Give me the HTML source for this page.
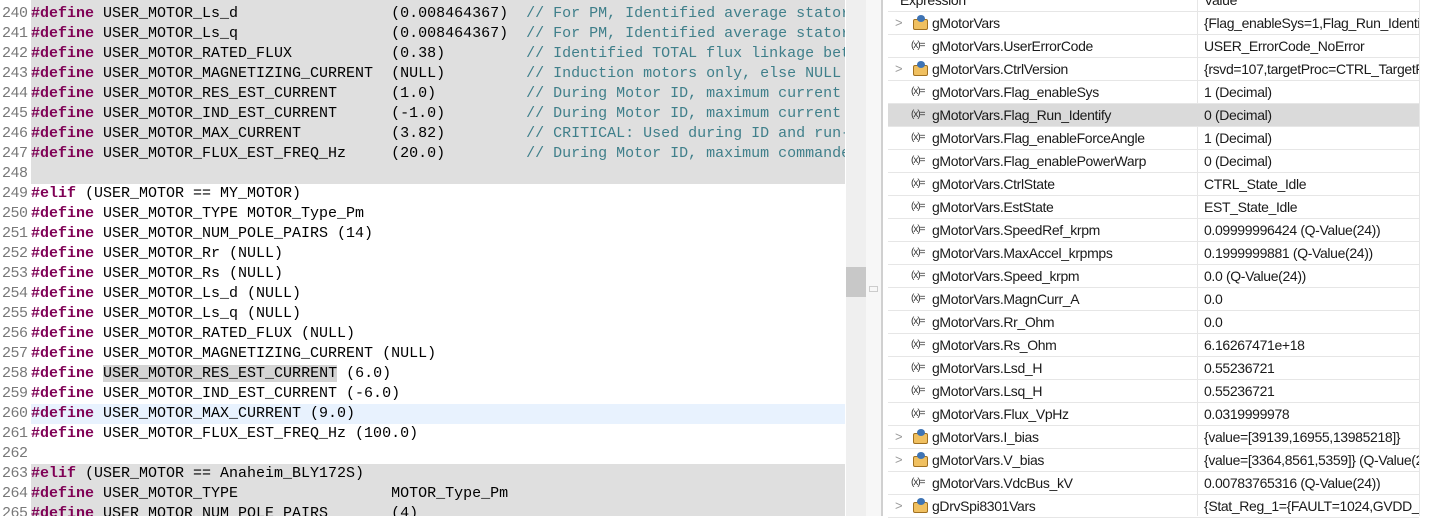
<!DOCTYPE html>
<html><head><style>
body{margin:0;width:1435px;height:516px;overflow:hidden;background:#fff;position:relative;font-family:"Liberation Mono",monospace}
.ed{position:absolute;left:0;top:0;width:845px;height:516px;overflow:hidden;background:#fff}
.ln{position:absolute;left:0;width:845px;height:20px;font-size:15px;line-height:20px;white-space:pre;color:#000}
.ln .n{display:inline-block;width:29px;color:#787878;background:#fff;padding-left:2px;letter-spacing:-0.5px}
.g{background:#dfdfdf}
.b{background:#e8f2fe}
.k{color:#7f0055;font-weight:bold}
.c{color:#3f7f8a}
.sel{background:#d4d4d4}
.sb{position:absolute;left:846px;top:0;width:20px;height:516px;background:#efefef}
.th{position:absolute;left:846px;top:267px;width:20px;height:30px;background:#c8c8c8}
.ov{position:absolute;left:866px;top:0;width:15px;height:516px;background:#f7f7f7}
.vl{position:absolute;left:881px;top:0;width:2px;height:516px;background:#d0d0d0}
.pn{position:absolute;left:883px;top:0;width:552px;height:516px;background:#fff;font-family:"Liberation Sans",sans-serif;font-size:14px;letter-spacing:-0.35px}
.r{position:absolute;left:5px;width:531px;height:22px;border-bottom:1px solid #e6e6e6;line-height:22px;color:#1a1a1a}
.r .e{position:absolute;left:44px;white-space:nowrap}
.r .v{position:absolute;left:316px;width:215px;overflow:hidden;white-space:nowrap}
.r .ar{position:absolute;left:7px;top:0;color:#999;font-size:13px}
.r .x{position:absolute;left:23px;font-size:10px;color:#333;letter-spacing:-1px}
.fo{position:absolute;left:25px;top:7px;width:13px;height:9px;background:#f0c060;border:1px solid #a07020;border-radius:2px}
.fo:before{content:"";position:absolute;left:3px;top:-5px;width:8px;height:7px;border-radius:50%;background:#3f74b4}
.hl{background:#dadada}
.cd{position:absolute;left:314px;top:0;width:1px;height:516px;background:#e6e6e6}
.rb{position:absolute;left:536px;top:0;width:1px;height:516px;background:#e6e6e6}
</style></head><body>
<div class="ed">
<div class="ln g" style="top:-16px"><span class="n">239</span><span class="k">#define</span> USER_MOTOR_Ls_x                 (0.008464367)  <span class="c">// For PM, Identified average stator</span></div>
<div class="ln g" style="top:4px"><span class="n">240</span><span class="k">#define</span> USER_MOTOR_Ls_d                 (0.008464367)  <span class="c">// For PM, Identified average stator</span></div>
<div class="ln g" style="top:24px"><span class="n">241</span><span class="k">#define</span> USER_MOTOR_Ls_q                 (0.008464367)  <span class="c">// For PM, Identified average stator</span></div>
<div class="ln g" style="top:44px"><span class="n">242</span><span class="k">#define</span> USER_MOTOR_RATED_FLUX           (0.38)         <span class="c">// Identified TOTAL flux linkage bet</span></div>
<div class="ln g" style="top:64px"><span class="n">243</span><span class="k">#define</span> USER_MOTOR_MAGNETIZING_CURRENT  (NULL)         <span class="c">// Induction motors only, else NULL</span></div>
<div class="ln g" style="top:84px"><span class="n">244</span><span class="k">#define</span> USER_MOTOR_RES_EST_CURRENT      (1.0)          <span class="c">// During Motor ID, maximum current</span></div>
<div class="ln g" style="top:104px"><span class="n">245</span><span class="k">#define</span> USER_MOTOR_IND_EST_CURRENT      (-1.0)         <span class="c">// During Motor ID, maximum current</span></div>
<div class="ln g" style="top:124px"><span class="n">246</span><span class="k">#define</span> USER_MOTOR_MAX_CURRENT          (3.82)         <span class="c">// CRITICAL: Used during ID and run-</span></div>
<div class="ln g" style="top:144px"><span class="n">247</span><span class="k">#define</span> USER_MOTOR_FLUX_EST_FREQ_Hz     (20.0)         <span class="c">// During Motor ID, maximum commande</span></div>
<div class="ln g" style="top:164px"><span class="n">248</span></div>
<div class="ln" style="top:184px"><span class="n">249</span><span class="k">#elif</span> (USER_MOTOR == MY_MOTOR)</div>
<div class="ln" style="top:204px"><span class="n">250</span><span class="k">#define</span> USER_MOTOR_TYPE MOTOR_Type_Pm</div>
<div class="ln" style="top:224px"><span class="n">251</span><span class="k">#define</span> USER_MOTOR_NUM_POLE_PAIRS (14)</div>
<div class="ln" style="top:244px"><span class="n">252</span><span class="k">#define</span> USER_MOTOR_Rr (NULL)</div>
<div class="ln" style="top:264px"><span class="n">253</span><span class="k">#define</span> USER_MOTOR_Rs (NULL)</div>
<div class="ln" style="top:284px"><span class="n">254</span><span class="k">#define</span> USER_MOTOR_Ls_d (NULL)</div>
<div class="ln" style="top:304px"><span class="n">255</span><span class="k">#define</span> USER_MOTOR_Ls_q (NULL)</div>
<div class="ln" style="top:324px"><span class="n">256</span><span class="k">#define</span> USER_MOTOR_RATED_FLUX (NULL)</div>
<div class="ln" style="top:344px"><span class="n">257</span><span class="k">#define</span> USER_MOTOR_MAGNETIZING_CURRENT (NULL)</div>
<div class="ln" style="top:364px"><span class="n">258</span><span class="k">#define</span> <span class="sel">USER_MOTOR_RES_EST_CURRENT</span> (6.0)</div>
<div class="ln" style="top:384px"><span class="n">259</span><span class="k">#define</span> USER_MOTOR_IND_EST_CURRENT (-6.0)</div>
<div class="ln b" style="top:404px"><span class="n">260</span><span class="k">#define</span> USER_MOTOR_MAX_CURRENT (9.0)</div>
<div class="ln" style="top:424px"><span class="n">261</span><span class="k">#define</span> USER_MOTOR_FLUX_EST_FREQ_Hz (100.0)</div>
<div class="ln" style="top:444px"><span class="n">262</span></div>
<div class="ln g" style="top:464px"><span class="n">263</span><span class="k">#elif</span> (USER_MOTOR == Anaheim_BLY172S)</div>
<div class="ln g" style="top:484px"><span class="n">264</span><span class="k">#define</span> USER_MOTOR_TYPE                 MOTOR_Type_Pm</div>
<div class="ln g" style="top:504px"><span class="n">265</span><span class="k">#define</span> USER_MOTOR_NUM_POLE_PAIRS       (4)</div>
</div>
<div class="sb"></div><div class="th"></div><div class="ov"><div style="position:absolute;left:3px;top:286px;width:7px;height:4px;border:1px solid #ccc"></div></div><div class="vl"></div>
<div class="pn">
<div class="cd"></div><div class="rb"></div>
<div class="r" style="top:-11px"><span class="e" style="left:12px">Expression</span><span class="v">Value</span></div>
<div class="r" style="top:12px"><span class="ar">&gt;</span><span class="fo"></span><span class="e">gMotorVars</span><span class="v">{Flag_enableSys=1,Flag_Run_Identify=0}</span></div>
<div class="r" style="top:35px"><span class="x">(x)=</span><span class="e">gMotorVars.UserErrorCode</span><span class="v">USER_ErrorCode_NoError</span></div>
<div class="r" style="top:58px"><span class="ar">&gt;</span><span class="fo"></span><span class="e">gMotorVars.CtrlVersion</span><span class="v">{rsvd=107,targetProc=CTRL_TargetProc}</span></div>
<div class="r" style="top:81px"><span class="x">(x)=</span><span class="e">gMotorVars.Flag_enableSys</span><span class="v">1 (Decimal)</span></div>
<div class="r hl" style="top:104px"><span class="x">(x)=</span><span class="e">gMotorVars.Flag_Run_Identify</span><span class="v">0 (Decimal)</span></div>
<div class="r" style="top:127px"><span class="x">(x)=</span><span class="e">gMotorVars.Flag_enableForceAngle</span><span class="v">1 (Decimal)</span></div>
<div class="r" style="top:150px"><span class="x">(x)=</span><span class="e">gMotorVars.Flag_enablePowerWarp</span><span class="v">0 (Decimal)</span></div>
<div class="r" style="top:173px"><span class="x">(x)=</span><span class="e">gMotorVars.CtrlState</span><span class="v">CTRL_State_Idle</span></div>
<div class="r" style="top:196px"><span class="x">(x)=</span><span class="e">gMotorVars.EstState</span><span class="v">EST_State_Idle</span></div>
<div class="r" style="top:219px"><span class="x">(x)=</span><span class="e">gMotorVars.SpeedRef_krpm</span><span class="v">0.09999996424 (Q-Value(24))</span></div>
<div class="r" style="top:242px"><span class="x">(x)=</span><span class="e">gMotorVars.MaxAccel_krpmps</span><span class="v">0.1999999881 (Q-Value(24))</span></div>
<div class="r" style="top:265px"><span class="x">(x)=</span><span class="e">gMotorVars.Speed_krpm</span><span class="v">0.0 (Q-Value(24))</span></div>
<div class="r" style="top:288px"><span class="x">(x)=</span><span class="e">gMotorVars.MagnCurr_A</span><span class="v">0.0</span></div>
<div class="r" style="top:311px"><span class="x">(x)=</span><span class="e">gMotorVars.Rr_Ohm</span><span class="v">0.0</span></div>
<div class="r" style="top:334px"><span class="x">(x)=</span><span class="e">gMotorVars.Rs_Ohm</span><span class="v">6.16267471e+18</span></div>
<div class="r" style="top:357px"><span class="x">(x)=</span><span class="e">gMotorVars.Lsd_H</span><span class="v">0.55236721</span></div>
<div class="r" style="top:380px"><span class="x">(x)=</span><span class="e">gMotorVars.Lsq_H</span><span class="v">0.55236721</span></div>
<div class="r" style="top:403px"><span class="x">(x)=</span><span class="e">gMotorVars.Flux_VpHz</span><span class="v">0.0319999978</span></div>
<div class="r" style="top:426px"><span class="ar">&gt;</span><span class="fo"></span><span class="e">gMotorVars.I_bias</span><span class="v">{value=[39139,16955,13985218]}</span></div>
<div class="r" style="top:449px"><span class="ar">&gt;</span><span class="fo"></span><span class="e">gMotorVars.V_bias</span><span class="v">{value=[3364,8561,5359]} (Q-Value(24))</span></div>
<div class="r" style="top:472px"><span class="x">(x)=</span><span class="e">gMotorVars.VdcBus_kV</span><span class="v">0.00783765316 (Q-Value(24))</span></div>
<div class="r" style="top:495px"><span class="ar">&gt;</span><span class="fo"></span><span class="e">gDrvSpi8301Vars</span><span class="v">{Stat_Reg_1={FAULT=1024,GVDD_UV=0}}</span></div>
</div>
</body></html>
